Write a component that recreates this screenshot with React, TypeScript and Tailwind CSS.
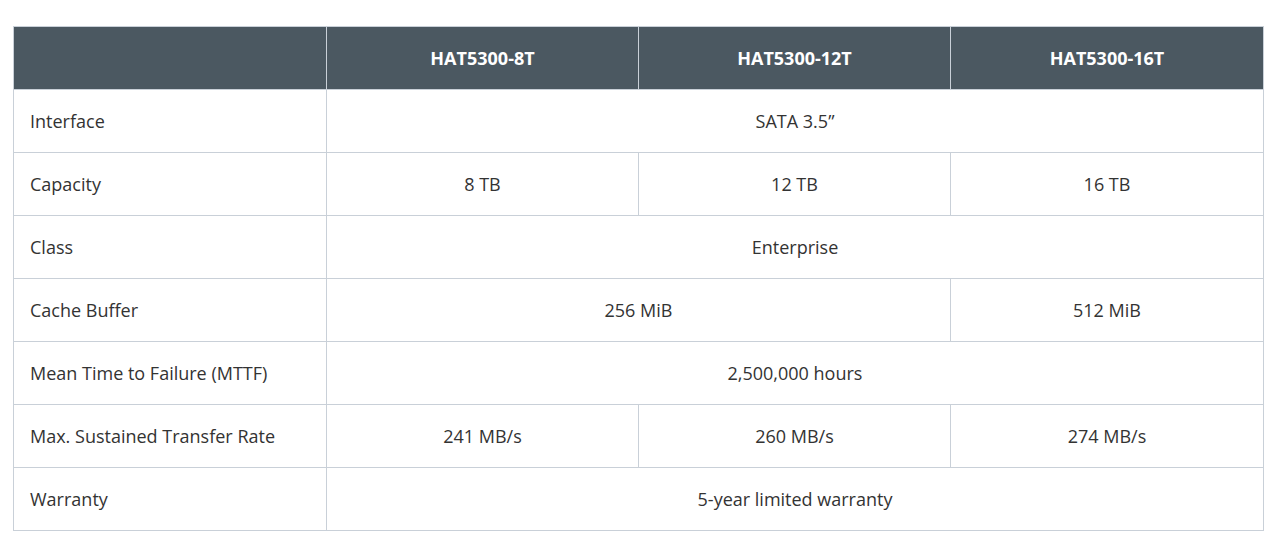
export default function App() {
  const td = "border border-[#c9d0d8] h-[63px] text-center";
  const th = "border border-[#c9d0d8] h-[63px] text-left pl-[16px]";
  const rows: [string, ...[string, number][]][] = [
    ["Interface", ["SATA 3.5”", 3]],
    ["Capacity", ["8 TB", 1], ["12 TB", 1], ["16 TB", 1]],
    ["Class", ["Enterprise", 3]],
    ["Cache Buffer", ["256 MiB", 2], ["512 MiB", 1]],
    ["Mean Time to Failure (MTTF)", ["2,500,000 hours", 3]],
    ["Max. Sustained Transfer Rate", ["241 MB/s", 1], ["260 MB/s", 1], ["274 MB/s", 1]],
    ["Warranty", ["5-year limited warranty", 3]],
  ];
  return (
    <div className="bg-white w-[1283px] h-[545px] pt-[26px] pl-[13px]" style={{ fontFamily: '"Open Sans", sans-serif' }}>
      <table className="border-collapse table-fixed w-[1250px] text-[18px] text-[#333]">
        <colgroup>
          <col className="w-[313px]" />
          <col className="w-[312px]" />
          <col className="w-[312px]" />
          <col className="w-[313px]" />
        </colgroup>
        <thead>
          <tr className="bg-[#4b5861] text-white font-bold">
            <th className="border border-[#c9d0d8] h-[63px]"></th>
            <th className="border border-[#c9d0d8]">HAT5300-8T</th>
            <th className="border border-[#c9d0d8]">HAT5300-12T</th>
            <th className="border border-[#c9d0d8]">HAT5300-16T</th>
          </tr>
        </thead>
        <tbody>
          {rows.map(([label, ...cells]) => (
            <tr key={label}>
              <td className={th}>{label}</td>
              {cells.map(([t, span], i) => (
                <td key={i} colSpan={span} className={td}>{t}</td>
              ))}
            </tr>
          ))}
        </tbody>
      </table>
    </div>
  );
}
